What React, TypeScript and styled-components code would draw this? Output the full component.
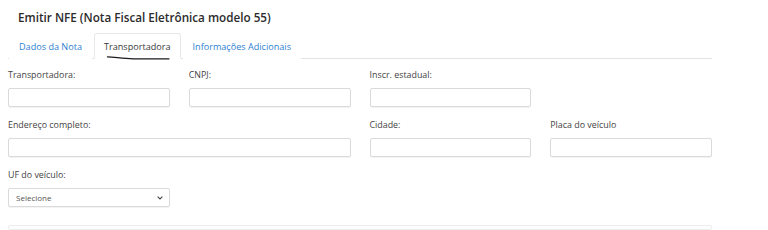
import React from "react";
import styled, { createGlobalStyle } from "styled-components";

const Global = createGlobalStyle`
  html, body { margin: 0; padding: 0; background: #fff; }
  body { font-family: "Open Sans", "Noto Sans", Arial, sans-serif; color: #333; }
  * { box-sizing: border-box; }
`;

const Page = styled.div`
  width: 768px;
  height: 230px;
  overflow: hidden;
  display: flex;
  flex-direction: column;
`;

const Title = styled.h1`
  margin: 0;
  padding: 8px 18px 0;
  font-size: 11.7px;
  font-weight: 600;
  line-height: 18px;
  color: #2b2b2b;
`;

const TabBar = styled.div`
  margin: 7px 8px 0;
  padding-left: 1px;
  width: 704px;
  height: 26px;
  display: flex;
  gap: 2px;
  border-bottom: 1px solid #e3e3e3;
`;

const Tab = styled.div<{ $active?: boolean }>`
  position: relative;
  height: 26px;
  padding: 0 9px;
  display: flex;
  align-items: center;
  font-size: 9.1px;
  color: ${(p) => (p.$active ? "#3a3a3a" : "#2f7fd1")};
  background: #fff;
  border: 1px solid ${(p) => (p.$active ? "#e8e8e8" : "transparent")};
  border-bottom-color: ${(p) => (p.$active ? "#fff" : "transparent")};
  border-radius: 3px 3px 0 0;
  margin-bottom: -1px;
`;

const Scribble = styled.svg`
  position: absolute;
  left: 12px;
  top: 22px;
  overflow: visible;
`;

const Form = styled.div`
  padding: 9px 8px 0;
  width: 720px;
  display: grid;
  grid-template-columns: repeat(4, 1fr);
  column-gap: 19px;
  row-gap: 11px;
`;

const Field = styled.div<{ $span?: number; $start?: number }>`
  display: flex;
  flex-direction: column;
  grid-column: ${(p) => (p.$start ? `${p.$start} / span ${p.$span || 1}` : `span ${p.$span || 1}`)};
`;

const Label = styled.label`
  font-size: 8.9px;
  line-height: 14px;
  color: #444;
  margin-bottom: 6px;
`;

const Input = styled.div`
  height: 19px;
  border: 1px solid #dadada;
  border-radius: 2px;
  background: #fff;
  box-shadow: 0 1px 1px rgba(0, 0, 0, 0.05);
`;

const Select = styled.div`
  height: 19px;
  border: 1px solid #dadada;
  border-radius: 2px;
  background: #fff;
  box-shadow: 0 1px 1px rgba(0, 0, 0, 0.05);
  display: flex;
  align-items: center;
  justify-content: space-between;
  padding: 0 6px 0 7px;
  font-size: 8px;
  color: #555;
`;

const Card = styled.div`
  margin: 18px 8px 0;
  width: 704px;
  height: 20px;
  border: 1px solid #ededed;
  border-radius: 2px;
`;

export default function App() {
  return (
    <Page>
      <Global />
      <Title>Emitir NFE (Nota Fiscal Eletrônica modelo 55)</Title>
      <TabBar>
        <Tab>Dados da Nota</Tab>
        <Tab $active>
          Transportadora
          <Scribble width="64" height="6" viewBox="0 0 64 6">
            <path d="M0.5 0.8 C 8 1.2, 16 2.4, 26 2.8 C 38 3, 52 2.9, 62 2.8" stroke="#1a1a1a" strokeWidth="1.3" fill="none" strokeLinecap="round" />
          </Scribble>
        </Tab>
        <Tab>Informações Adicionais</Tab>
      </TabBar>
      <Form>
        <Field>
          <Label>Transportadora:</Label>
          <Input />
        </Field>
        <Field>
          <Label>CNPJ:</Label>
          <Input />
        </Field>
        <Field>
          <Label>Inscr. estadual:</Label>
          <Input />
        </Field>
        <Field $start={1} $span={2}>
          <Label>Endereço completo:</Label>
          <Input />
        </Field>
        <Field>
          <Label>Cidade:</Label>
          <Input />
        </Field>
        <Field>
          <Label>Placa do veículo</Label>
          <Input />
        </Field>
        <Field $start={1}>
          <Label>UF do veículo:</Label>
          <Select>
            <span>Selecione</span>
            <svg width="6" height="4" viewBox="0 0 6 4">
              <path d="M0.6 0.7 L3 3 L5.4 0.7" stroke="#444" strokeWidth="1.1" fill="none" />
            </svg>
          </Select>
        </Field>
      </Form>
      <Card />
    </Page>
  );
}
